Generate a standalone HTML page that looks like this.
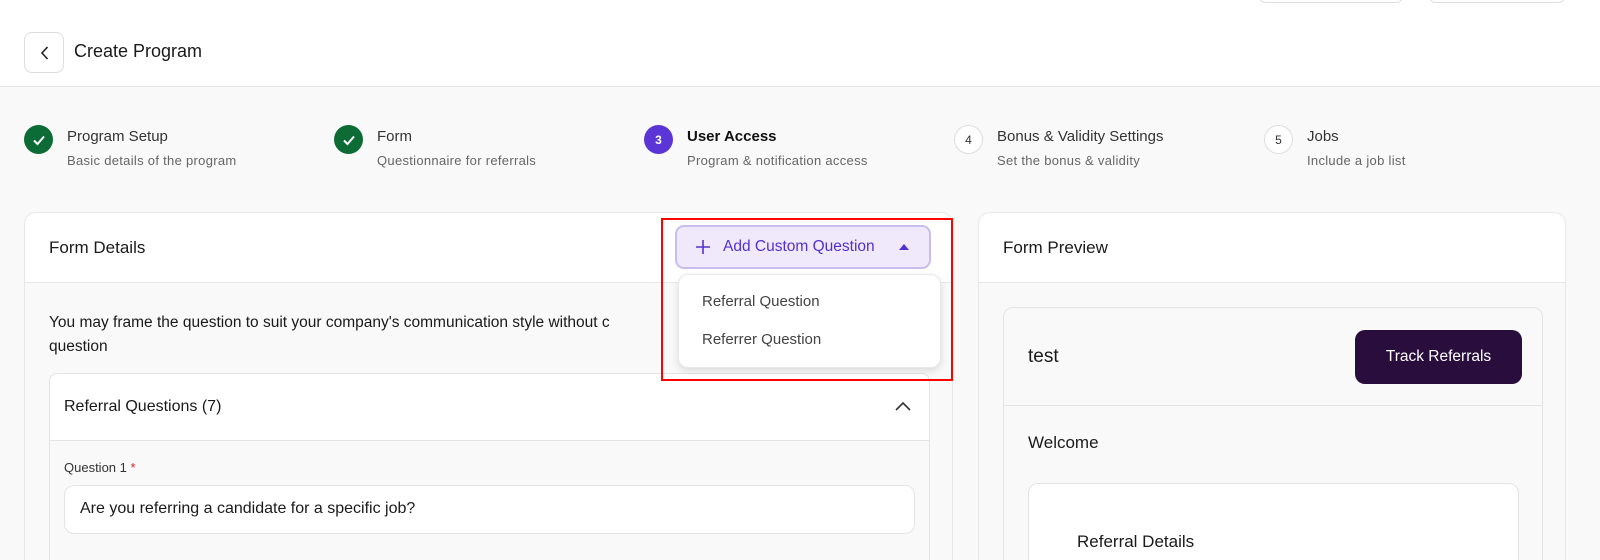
<!DOCTYPE html><html><head><style>
*{box-sizing:border-box;margin:0;padding:0}
html,body{width:1600px;height:560px;overflow:hidden}
body{background:#f9f9f9;font-family:"Liberation Sans",sans-serif;color:#1a1a1a;position:relative}
.a{position:absolute}
.hdr{left:0;top:0;width:1600px;height:87px;background:#fff;border-bottom:1px solid #e6e6e6}
.step .c{position:absolute;left:0;top:0;width:29px;height:29px;border-radius:50%;display:flex;align-items:center;justify-content:center;color:#fff;font-size:12px;font-weight:bold}
.step .t{position:absolute;left:43px;top:3px;font-size:15px;color:#333;white-space:nowrap}
.step .s{position:absolute;left:43px;top:28px;font-size:13px;color:#666;white-space:nowrap;letter-spacing:.3px}
.card{background:#fff;border:1px solid #e8e8e8;border-radius:12px 12px 0 0;border-bottom:none}
</style></head><body>
<div class="a hdr"></div>
<div class="a" style="left:1258px;top:-20px;width:146px;height:23px;border:1px solid #ddd;border-radius:8px;background:#fff"></div>
<div class="a" style="left:1428px;top:-20px;width:138px;height:23px;border:1px solid #ddd;border-radius:8px;background:#fff"></div>
<div class="a" style="left:24px;top:32px;width:40px;height:41px;border:1px solid #ddd;border-radius:8px;background:#fff"><svg width="40" height="40" viewBox="0 0 40 40"><path d="M22.5 14 L17 20 L22.5 26" fill="none" stroke="#222" stroke-width="1.6"/></svg></div>
<div class="a" style="left:74px;top:41px;font-size:18px">Create Program</div>

<div class="a step" style="left:24px;top:125px"><div class="c" style="background:#0d6b35"><svg width="16" height="16" viewBox="0 0 16 16"><path d="M3 8.5L6.5 12L13 4.5" fill="none" stroke="#fff" stroke-width="2"/></svg></div><div class="t">Program Setup</div><div class="s">Basic details of the program</div></div>
<div class="a step" style="left:334px;top:125px"><div class="c" style="background:#0d6b35"><svg width="16" height="16" viewBox="0 0 16 16"><path d="M3 8.5L6.5 12L13 4.5" fill="none" stroke="#fff" stroke-width="2"/></svg></div><div class="t">Form</div><div class="s">Questionnaire for referrals</div></div>
<div class="a step" style="left:644px;top:125px"><div class="c" style="background:#5b35d5">3</div><div class="t" style="color:#111;font-weight:bold">User Access</div><div class="s">Program &amp; notification access</div></div>
<div class="a step" style="left:954px;top:125px"><div class="c" style="background:#fff;border:1px solid #ddd;color:#333;font-weight:normal">4</div><div class="t">Bonus &amp; Validity Settings</div><div class="s">Set the bonus &amp; validity</div></div>
<div class="a step" style="left:1264px;top:125px"><div class="c" style="background:#fff;border:1px solid #ddd;color:#333;font-weight:normal">5</div><div class="t">Jobs</div><div class="s">Include a job list</div></div>

<div class="a card" style="left:24px;top:212px;width:929px;height:348px;background:#f9f9f9;overflow:hidden">
 <div style="height:70px;background:#fff;border-bottom:1px solid #e8e8e8;padding:25px 24px;font-size:17px">Form Details</div>
 <div style="position:absolute;left:24px;top:98px;font-size:15.5px;line-height:24px;width:840px">You may frame the question to suit your company's communication style without c<br>question</div>
 <div style="position:absolute;left:24px;top:160px;width:881px;height:300px;background:#f9f9f9;border:1px solid #e4e4e4;border-radius:8px">
  <div style="height:67px;background:#fff;border-bottom:1px solid #e4e4e4;border-radius:8px 8px 0 0;padding:24px 14px;font-size:16px">Referral Questions (7)</div>
  <svg style="position:absolute;left:844px;top:26px" width="18" height="14"><path d="M2 10L9 3L16 10" fill="none" stroke="#333" stroke-width="1.6"/></svg>
  <div style="position:absolute;left:14px;top:86px;font-size:13px;color:#333">Question 1 <span style="color:#d22">*</span></div>
  <div style="position:absolute;left:14px;top:111px;width:851px;height:49px;background:#fff;border:1px solid #e4e4e4;border-radius:10px;padding:14px 15px;font-size:16px">Are you referring a candidate for a specific job?</div>
 </div>
</div>

<div class="a card" style="left:978px;top:212px;width:588px;height:348px;background:#f9f9f9;overflow:hidden">
 <div style="height:70px;background:#fff;border-bottom:1px solid #e8e8e8;padding:25px 24px;font-size:17px">Form Preview</div>
 <div style="position:absolute;left:24px;top:94px;width:540px;height:300px;border:1px solid #e4e4e4;border-radius:10px;background:#f9f9f9">
  <div style="height:98px;border-bottom:1px solid #e4e4e4;position:relative"><div style="position:absolute;left:24px;top:38px;font-size:19px">test</div>
  <div style="position:absolute;left:351px;top:22px;width:167px;height:54px;background:#290d3d;border-radius:10px;color:#fff;font-size:15.5px;text-align:center;line-height:54px">Track Referrals</div></div>
  <div style="position:absolute;left:24px;top:125px;font-size:17px">Welcome</div>
  <div style="position:absolute;left:24px;top:175px;width:491px;height:200px;background:#fff;border:1px solid #e4e4e4;border-radius:10px"><div style="position:absolute;left:48px;top:48px;font-size:17px">Referral Details</div></div>
 </div>
</div>

<div class="a" style="left:675px;top:225px;width:256px;height:44px;background:#efe9fb;border:2px solid #c9bdf0;border-radius:9px;color:#5530d0;font-size:15.5px;line-height:40px">
 <svg style="position:absolute;left:18px;top:12px" width="16" height="16"><path d="M8 1V15M1 8H15" stroke="#5530d0" stroke-width="1.6"/></svg>
 <span style="position:absolute;left:46px">Add Custom Question</span>
 <svg style="position:absolute;left:222px;top:16px" width="10" height="8"><path d="M0 7L5 1L10 7Z" fill="#5530d0"/></svg>
</div>
<div class="a" style="left:678px;top:274px;width:263px;height:94px;background:#fff;border:1px solid #e8e8e8;border-radius:10px;box-shadow:0 3px 8px rgba(0,0,0,.12);font-size:15px;color:#444">
 <div style="position:absolute;left:23px;top:18px">Referral Question</div>
 <div style="position:absolute;left:23px;top:56px">Referrer Question</div>
</div>
<div class="a" style="left:661px;top:218px;width:292px;height:163px;border:2px solid #f00"></div>
</body></html>
